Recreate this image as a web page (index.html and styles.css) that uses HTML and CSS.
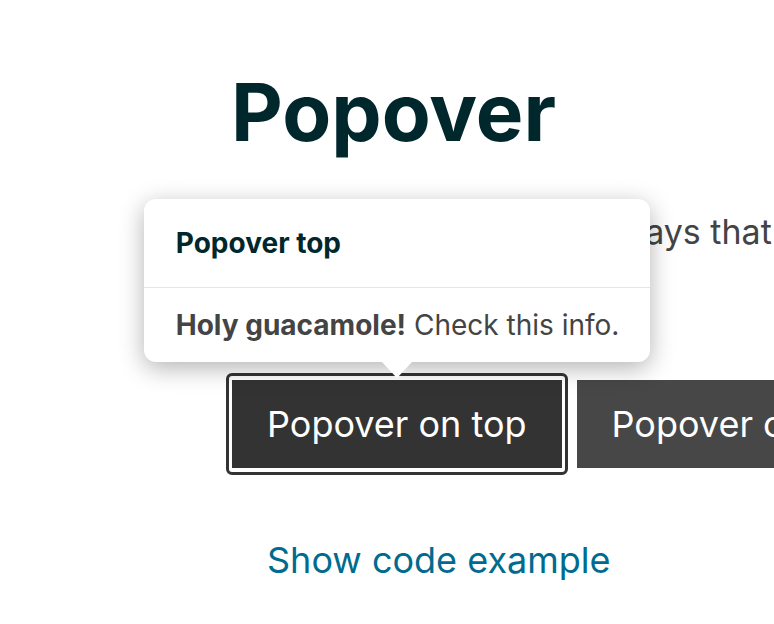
FILE: index.html
```html
<!DOCTYPE html>
<html lang="en">
<head>
<meta charset="utf-8">
<title>Popover</title>
<link rel="stylesheet" href="styles.css">
</head>
<body>
<main class="page">
  <h1 class="title">Popover</h1>
  <p class="lead">Popovers are small overlays that open on click.</p>
  <div class="btn-row">
    <div class="btn-wrap">
      <button class="btn btn-focus" type="button">Popover on top</button>
      <div class="popover" role="tooltip">
        <div class="popover-header">Popover top</div>
        <div class="popover-body"><strong>Holy guacamole!</strong> Check this info.</div>
        <span class="popover-arrow"></span>
      </div>
    </div>
    <button class="btn btn-alt" type="button">Popover on right</button>
  </div>
  <a class="code-link" href="#">Show code example</a>
</main>
</body>
</html>
```

FILE: styles.css
```css
html, body {
  margin: 0;
  padding: 0;
  background: #fff;
}
body {
  font-family: Inter, "Noto Sans", "Liberation Sans", sans-serif;
  overflow: hidden;
  width: 774px;
  height: 624px;
}
.page {
  padding: 64px 0 0 228px;
  white-space: nowrap;
}
.title {
  margin: 0;
  padding-left: 3px;
  font-size: 80px;
  line-height: 96px;
  font-weight: 700;
  color: #00272c;
}
.lead {
  margin: 48px 0 0 23px;
  font-size: 34px;
  line-height: 48px;
  color: #444;
}
.btn-row {
  display: flex;
  gap: 15px;
  margin: 124px 0 0 4px;
}
.btn-wrap {
  position: relative;
}
.btn {
  font-family: inherit;
  font-size: 36px;
  line-height: 44px;
  padding: 22px 35px;
  border: 0;
  border-radius: 0;
  color: #fff;
  cursor: pointer;
  display: block;
}
.btn-focus {
  background: #333;
  position: relative;
}
.btn-focus::after {
  content: "";
  position: absolute;
  inset: -7px -6px -7px -6px;
  border: 3px solid #333;
  border-radius: 6px;
  box-shadow: inset 0 0 0 1px #fff;
}
.btn-focus::before {
  content: "";
  position: absolute;
  inset: -4px -3px -4px -3px;
  border: 3px solid #fff;
}
.btn-alt {
  background: #474747;
}
.popover {
  position: absolute;
  left: 50%;
  bottom: calc(100% + 18px);
  transform: translateX(-50%);
  width: 506px;
  background: #fff;
  border-radius: 12px;
  box-shadow: 0 6px 24px rgba(0, 0, 0, 0.3);
  z-index: 2;
  text-align: left;
}
.popover-header {
  padding: 27px 32px;
  font-size: 28px;
  line-height: 34px;
  font-weight: 700;
  color: #00272c;
  border-bottom: 1px solid #e6e6e6;
}
.popover-body {
  padding: 20px 32px;
  font-size: 28px;
  line-height: 34px;
  color: #444;
}
.popover-body strong {
  font-weight: 700;
}
.popover-arrow {
  position: absolute;
  left: 50%;
  top: 100%;
  transform: translateX(-50%);
  width: 0;
  height: 0;
  border-left: 15px solid transparent;
  border-right: 15px solid transparent;
  border-top: 16px solid #fff;
}
.code-link {
  display: block;
  width: fit-content;
  margin: 68px 0 0 39px;
  font-size: 36px;
  line-height: 48px;
  color: #006b8f;
  text-decoration: none;
}
```
